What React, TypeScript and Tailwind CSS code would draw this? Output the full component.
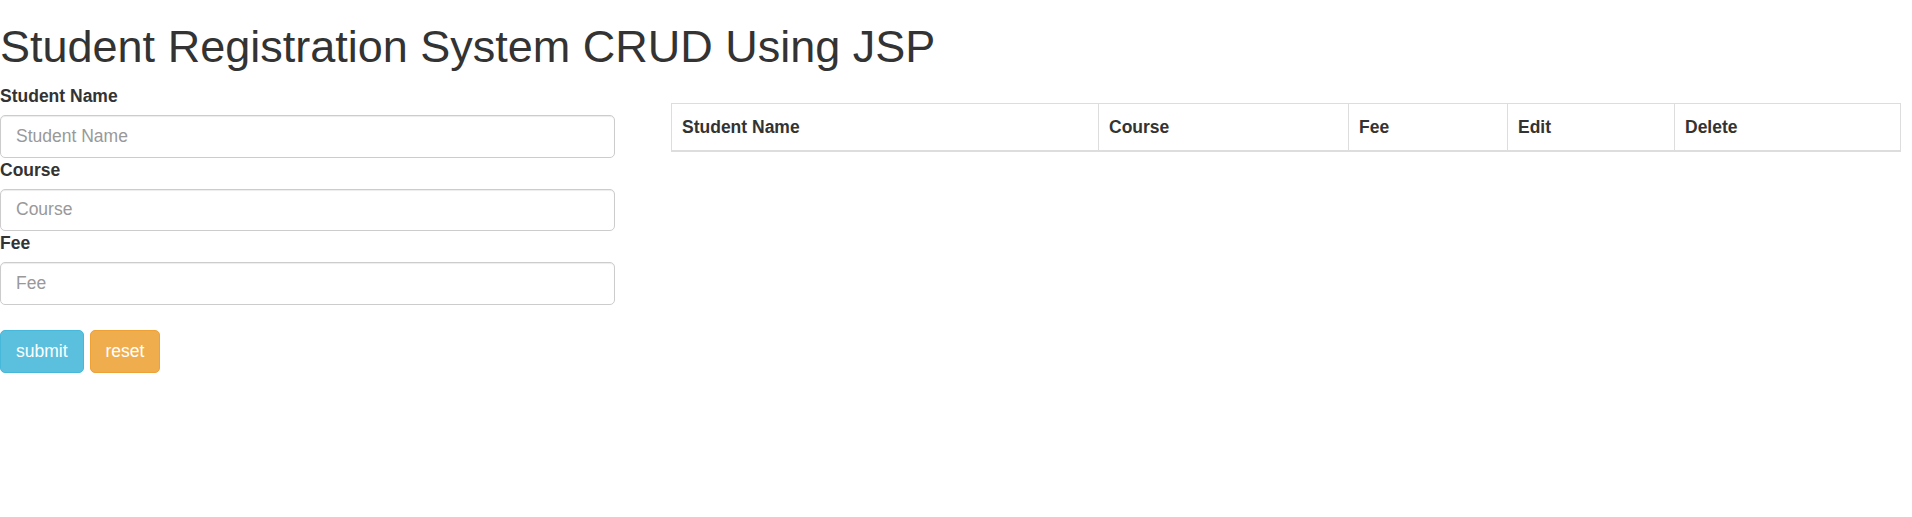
import React from 'react';

const fields = [
  { id: 'sname', label: 'Student Name' },
  { id: 'course', label: 'Course' },
  { id: 'fee', label: 'Fee' },
];

const columns = [
  { name: 'Student Name', width: 'w-[427px]' },
  { name: 'Course', width: 'w-[250px]' },
  { name: 'Fee', width: 'w-[159px]' },
  { name: 'Edit', width: 'w-[167px]' },
  { name: 'Delete', width: 'w-[226px]' },
];

export default function App() {
  return (
    <div className="min-h-[517px] bg-white text-[#333] font-['Liberation_Sans',Arial,sans-serif]">
      <h1 className="mt-[22px] mb-[12.5px] text-[45px] leading-[49.5px] font-normal">
        Student Registration System CRUD Using JSP
      </h1>
      <div className="flex items-start">
        {/* form */}
        <form className="w-[615px]" onSubmit={(e) => e.preventDefault()}>
          {fields.map((f) => (
            <div key={f.id}>
              <label htmlFor={f.id} className="block mb-[6px] text-[17.5px] leading-[25px] font-bold">
                {f.label}
              </label>
              <input
                id={f.id}
                type="text"
                placeholder={f.label}
                className="block w-full h-[42.5px] px-[15px] text-[17.5px] text-[#555] border border-[#ccc] rounded-[5px] shadow-[inset_0_1px_1px_rgba(0,0,0,0.075)] placeholder:text-[#999] focus:outline-none"
              />
            </div>
          ))}
          <div className="flex gap-[6px] mt-[25.5px]">
            <button
              type="submit"
              className="h-[42.5px] px-[15px] text-[17.5px] text-white bg-[#5bc0de] border border-[#46b8da] rounded-[5px]"
            >
              submit
            </button>
            <button
              type="reset"
              className="h-[42.5px] px-[15px] text-[17.5px] text-white bg-[#f0ad4e] border border-[#eea236] rounded-[5px]"
            >
              reset
            </button>
          </div>
        </form>

        {/* table */}
        <div className="ml-[56px] mt-[19px] w-[1229px]">
          <table className="w-full table-fixed border-collapse border border-[#ddd]">
            <thead>
              <tr>
                {columns.map((c) => (
                  <th
                    key={c.name}
                    className={`${c.width} px-[10px] pt-[11px] pb-[10px] text-left text-[17.5px] leading-[25px] font-bold border border-[#ddd] border-b-[2.5px]`}
                  >
                    {c.name}
                  </th>
                ))}
              </tr>
            </thead>
            <tbody></tbody>
          </table>
        </div>
      </div>
    </div>
  );
}
